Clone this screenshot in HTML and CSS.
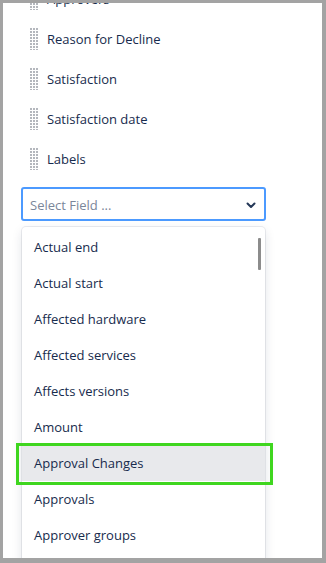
FILE: index.html
```html
<!DOCTYPE html>
<html>
<head>
<meta charset="utf-8">
<link rel="stylesheet" href="styles.css">
</head>
<body>
<div class="frame">
  <div class="content">
    <ul class="fields">
      <li class="field"><span class="grip"></span><span class="label">Approvers</span></li>
      <li class="field"><span class="grip"></span><span class="label">Reason for Decline</span></li>
      <li class="field"><span class="grip"></span><span class="label">Satisfaction</span></li>
      <li class="field"><span class="grip"></span><span class="label">Satisfaction date</span></li>
      <li class="field"><span class="grip"></span><span class="label">Labels</span></li>
    </ul>
    <div class="select">
      <span class="placeholder">Select Field ...</span>
      <svg class="chevron" width="10" height="7" viewBox="0 0 10 7"><path d="M1.5 1.5 L5 5 L8.5 1.5" fill="none" stroke="#253858" stroke-width="2" stroke-linecap="round" stroke-linejoin="round"/></svg>
    </div>
    <div class="menu">
      <div class="scrollbar"></div>
      <div class="option">Actual end</div>
      <div class="option">Actual start</div>
      <div class="option">Affected hardware</div>
      <div class="option">Affected services</div>
      <div class="option">Affects versions</div>
      <div class="option">Amount</div>
      <div class="option active">Approval Changes</div>
      <div class="option">Approvals</div>
      <div class="option">Approver groups</div>
    </div>
  </div>
  <div class="highlight-box"></div>
</div>
</body>
</html>
```
FILE: styles.css
```css
* { box-sizing: border-box; }
html, body { margin: 0; padding: 0; background: #fff; }
body {
  font-family: "Open Sans", "Noto Sans", sans-serif;
  font-size: 13px;
  color: #172b4d;
}
.frame {
  position: relative;
  width: 326px;
  height: 563px;
  border-style: solid;
  border-color: #a3a3a3;
  border-width: 3px 4px 5px 3px;
  overflow: hidden;
  background: #fff;
}
.content { margin-top: -24px; }
.fields { list-style: none; margin: 0; padding: 0; }
.field {
  height: 40px;
  display: flex;
  align-items: center;
  padding-left: 27px;
  gap: 8px;
}
.grip {
  width: 9px;
  height: 22px;
  background-image: radial-gradient(circle at 1px 1px, #b4b7bd 0.9px, transparent 1.1px);
  background-size: 3px 3px;
}
.label { line-height: 20px; }
.select {
  margin: 8px 0 0 18px;
  width: 245px;
  height: 34px;
  border: 2px solid #4c9aff;
  border-radius: 3px;
  display: flex;
  align-items: center;
  justify-content: space-between;
  padding: 1px 8px 0 7px;
}
.placeholder { color: #7a869a; }
.chevron { margin-top: 1px; }
.menu {
  position: relative;
  margin: 6px 0 0 19px;
  width: 243px;
  height: 400px;
  padding-top: 2px;
  background: #fff;
  border-radius: 4px;
  box-shadow: 0 0 0 1px rgba(9, 30, 66, 0.08), 0 4px 11px rgba(9, 30, 66, 0.12);
}
.scrollbar {
  position: absolute;
  right: 4px;
  top: 11px;
  width: 3px;
  height: 32px;
  background: #8c8c8c;
  border-radius: 1px;
}
.option {
  height: 36px;
  display: flex;
  align-items: center;
  padding-left: 12px;
}
.option.active { background: #e8e9ec; }
.highlight-box {
  position: absolute;
  left: 13px;
  top: 440px;
  width: 257px;
  height: 42px;
  border: 3px solid #3fd61f;
}
```
